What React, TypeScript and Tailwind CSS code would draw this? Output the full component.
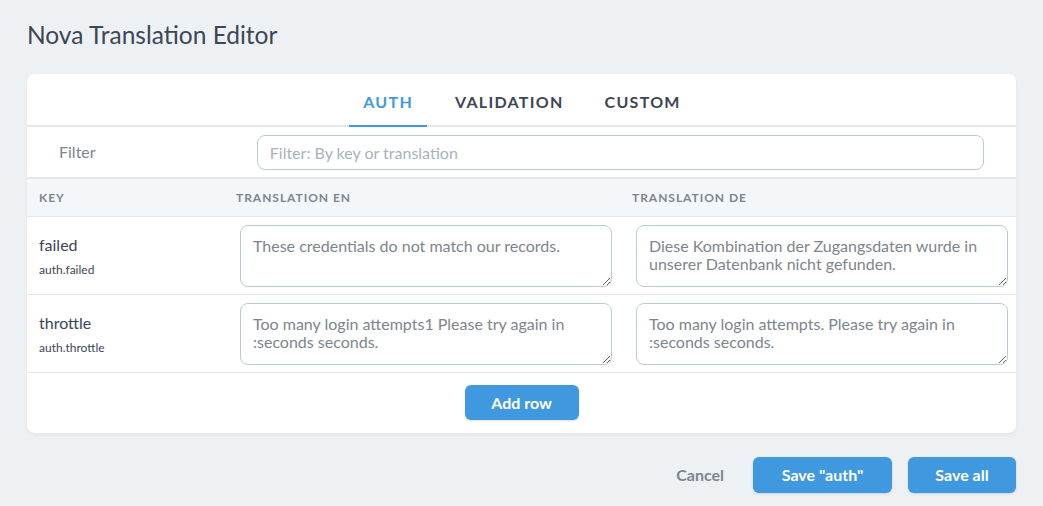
import React from "react";

const rows = [
  {
    key: "failed",
    full: "auth.failed",
    en: "These credentials do not match our records.",
    de: "Diese Kombination der Zugangsdaten wurde in unserer Datenbank nicht gefunden.",
  },
  {
    key: "throttle",
    full: "auth.throttle",
    en: "Too many login attempts1 Please try again in :seconds seconds.",
    de: "Too many login attempts. Please try again in :seconds seconds.",
  },
];

export default function App() {
  return (
    <div
      className="min-h-[506px] w-full bg-[#eef1f4] px-[27px] pt-[18px] pb-[12px]"
      style={{ fontFamily: "Lato, 'Noto Sans', sans-serif" }}
    >
      <h1 className="text-[24.5px] leading-[34px] text-[#3c4655] font-normal">Nova Translation Editor</h1>

      <div className="mt-[22px] bg-white rounded-lg shadow-[0_2px_4px_rgba(0,0,0,0.05)]">
        {/* Tabs */}
        <div className="flex justify-center gap-[15px] h-[53px] border-b-2 border-[#e3e7eb]">
          <div className="px-[14px] pt-[5px] flex items-center text-[16px] font-bold tracking-[0.08em] text-[#4099de] border-b-2 border-[#4099de] -mb-[2px]">
            AUTH
          </div>
          <div className="px-[13px] pt-[5px] flex items-center text-[16px] font-bold tracking-[0.08em] text-[#3c4655]">
            VALIDATION
          </div>
          <div className="px-[13px] pt-[5px] flex items-center text-[16px] font-bold tracking-[0.08em] text-[#3c4655]">
            CUSTOM
          </div>
        </div>

        {/* Filter */}
        <div className="flex items-center h-[52px] border-b-2 border-[#e3e7eb]">
          <div className="w-1/5 px-8 text-[16px] text-[#7c858e]">Filter</div>
          <div className="flex-1 px-8">
            <input
              className="w-full h-[35px] rounded-lg border border-[#bacad6] px-3 text-[16px] text-[#3c4655] placeholder:text-[#a8b2bc] outline-none"
              placeholder="Filter: By key or translation"
            />
          </div>
        </div>

        {/* Header */}
        <div className="grid grid-cols-[189px_1fr_1fr] gap-x-6 pr-2 h-[38px] items-center bg-[#f4f7fa] border-b border-[#e3e7eb]">
          <div className="pl-3 text-[12px] font-bold tracking-[0.08em] text-[#7c858e]">KEY</div>
          <div className="-ml-1 text-[12px] font-bold tracking-[0.08em] text-[#7c858e]">TRANSLATION EN</div>
          <div className="-ml-1 text-[12px] font-bold tracking-[0.08em] text-[#7c858e]">TRANSLATION DE</div>
        </div>

        {/* Rows */}
        {rows.map((r) => (
          <div
            key={r.key}
            className="grid grid-cols-[189px_1fr_1fr] gap-x-6 pr-2 h-[78px] items-center border-b border-[#e3e7eb]"
          >
            <div className="pl-3">
              <div className="text-[16px] leading-[20px] text-[#3c4655]">{r.key}</div>
              <div className="mt-[8px] text-[12px] leading-[14px] text-[#3c4655]">{r.full}</div>
            </div>
            <textarea
              defaultValue={r.en}
              className="block w-full h-[62px] rounded-lg border border-[#bacad6] px-3 pt-[11px] text-[16px] leading-[18px] text-[#7c858e] outline-none"
            />
            <textarea
              defaultValue={r.de}
              className="block w-full h-[62px] rounded-lg border border-[#bacad6] px-3 pt-[11px] text-[16px] leading-[18px] text-[#7c858e] outline-none"
            />
          </div>
        ))}

        {/* Add row */}
        <div className="flex justify-center pt-[12px] pb-[13px]">
          <button className="h-[35px] w-[114px] rounded-md bg-[#4099de] text-white text-[16px] font-bold shadow-sm">
            Add row
          </button>
        </div>
      </div>

      {/* Footer */}
      <div className="flex justify-end items-center mt-[24px]">
        <button className="text-[16px] font-bold text-[#7c858e] mr-[29px]">Cancel</button>
        <button className="h-[36px] w-[139px] rounded-md bg-[#4099de] text-white text-[16px] font-bold shadow-sm mr-4">
          Save "auth"
        </button>
        <button className="h-[36px] w-[108px] rounded-md bg-[#4099de] text-white text-[16px] font-bold shadow-sm">
          Save all
        </button>
      </div>
    </div>
  );
}
